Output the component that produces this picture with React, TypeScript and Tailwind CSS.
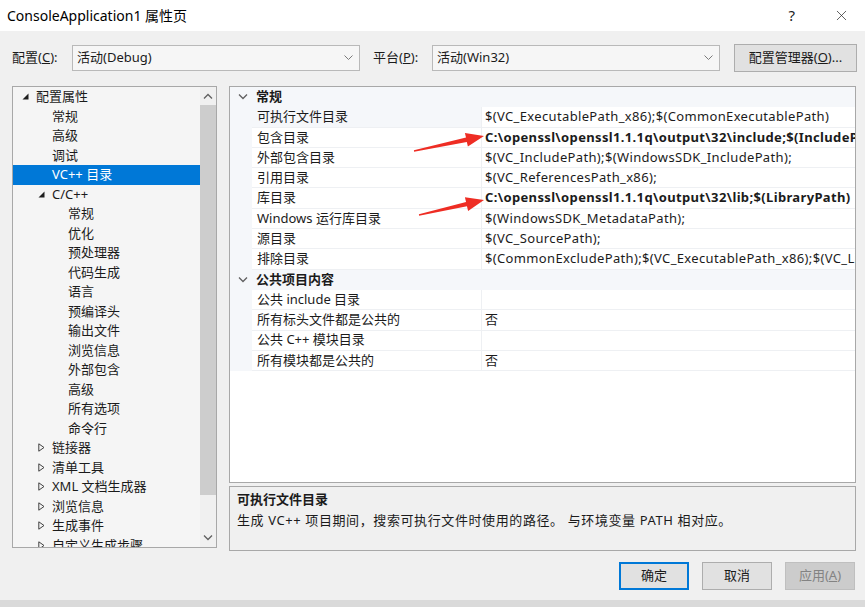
import { X } from "lucide-react";

const FONT = { fontFamily: '"Noto Sans", "Noto Sans CJK SC", sans-serif' };

type TreeItem = { label: string; level: number; expander?: "open" | "closed"; selected?: boolean };

const tree: TreeItem[] = [
  { label: "配置属性", level: 0, expander: "open" },
  { label: "常规", level: 1 },
  { label: "高级", level: 1 },
  { label: "调试", level: 1 },
  { label: "VC++ 目录", level: 1, selected: true },
  { label: "C/C++", level: 1, expander: "open" },
  { label: "常规", level: 2 },
  { label: "优化", level: 2 },
  { label: "预处理器", level: 2 },
  { label: "代码生成", level: 2 },
  { label: "语言", level: 2 },
  { label: "预编译头", level: 2 },
  { label: "输出文件", level: 2 },
  { label: "浏览信息", level: 2 },
  { label: "外部包含", level: 2 },
  { label: "高级", level: 2 },
  { label: "所有选项", level: 2 },
  { label: "命令行", level: 2 },
  { label: "链接器", level: 1, expander: "closed" },
  { label: "清单工具", level: 1, expander: "closed" },
  { label: "XML 文档生成器", level: 1, expander: "closed" },
  { label: "浏览信息", level: 1, expander: "closed" },
  { label: "生成事件", level: 1, expander: "closed" },
  { label: "自定义生成步骤", level: 1, expander: "closed" },
];

type Row =
  | { kind: "cat"; label: string }
  | { kind: "prop"; name: string; value: string; bold?: boolean; current?: boolean };

const rows: Row[] = [
  { kind: "cat", label: "常规" },
  { kind: "prop", name: "可执行文件目录", value: "$(VC_ExecutablePath_x86);$(CommonExecutablePath)", current: true },
  { kind: "prop", name: "包含目录", value: "C:\\openssl\\openssl1.1.1q\\output\\32\\include;$(IncludePath)", bold: true },
  { kind: "prop", name: "外部包含目录", value: "$(VC_IncludePath);$(WindowsSDK_IncludePath);" },
  { kind: "prop", name: "引用目录", value: "$(VC_ReferencesPath_x86);" },
  { kind: "prop", name: "库目录", value: "C:\\openssl\\openssl1.1.1q\\output\\32\\lib;$(LibraryPath)", bold: true },
  { kind: "prop", name: "Windows 运行库目录", value: "$(WindowsSDK_MetadataPath);" },
  { kind: "prop", name: "源目录", value: "$(VC_SourcePath);" },
  { kind: "prop", name: "排除目录", value: "$(CommonExcludePath);$(VC_ExecutablePath_x86);$(VC_LibraryPath_x86)" },
  { kind: "cat", label: "公共项目内容" },
  { kind: "prop", name: "公共 include 目录", value: "" },
  { kind: "prop", name: "所有标头文件都是公共的", value: "否" },
  { kind: "prop", name: "公共 C++ 模块目录", value: "" },
  { kind: "prop", name: "所有模块都是公共的", value: "否" },
];

function Chevron({ up }: { up?: boolean }) {
  return (
    <svg width="10" height="6" viewBox="0 0 10 6">
      <path d={up ? "M1 5.5 L5 1.5 L9 5.5" : "M1 0.5 L5 4.5 L9 0.5"} fill="none" stroke="#606060" strokeWidth="1.3" />
    </svg>
  );
}

function Expander({ kind }: { kind: "open" | "closed" }) {
  if (kind === "open") {
    return (
      <svg width="7" height="7" viewBox="0 0 7 7">
        <path d="M6.5 0.5 L6.5 6.5 L0.5 6.5 Z" fill="#1e1e1e" />
      </svg>
    );
  }
  return (
    <svg width="7" height="9" viewBox="0 0 7 9">
      <path d="M0.8 0.8 L6 4.5 L0.8 8.2 Z" fill="none" stroke="#404040" strokeWidth="1" />
    </svg>
  );
}

function SelectBox({ value }: { value: string }) {
  return (
    <div className="w-[288px] h-[26px] flex items-center justify-between bg-[#f6f6f6] border border-[#b9b9b9] pl-[4px] pr-[6px]">
      <span>{value}</span>
      <svg width="9" height="5" viewBox="0 0 9 5">
        <path d="M0.5 0.5 L4.5 4.5 L8.5 0.5" fill="none" stroke="#7a7a7a" strokeWidth="1" />
      </svg>
    </div>
  );
}

export default function App() {
  return (
    <div style={FONT} className="w-[865px] h-[607px] bg-[#f0f0f0] text-[13px] text-[#1b1b1b] relative overflow-hidden">
      {/* Title bar */}
      <div className="h-[31px] bg-white flex items-center pl-[7px] pr-[15px]">
        <span className="text-[14px] text-black">ConsoleApplication1 属性页</span>
        <div className="ml-auto flex items-center gap-[38px]">
          <span className="text-[15px] text-[#222]">?</span>
          <X size={17} strokeWidth={1} color="#222" />
        </div>
      </div>

      {/* Config row */}
      <div className="h-[27px] mt-[13px] flex items-center pl-[12px]">
        <span className="w-[60px]">
          配置(<span className="underline">C</span>):
        </span>
        <SelectBox value="活动(Debug)" />
        <span className="ml-[13px] w-[59px]">
          平台(<span className="underline">P</span>):
        </span>
        <SelectBox value="活动(Win32)" />
        <div className="ml-[14px] w-[123px] h-[28px] flex items-center justify-center bg-[#e1e1e1] border border-[#adadad]">
          配置管理器(<span className="underline">O</span>)...
        </div>
      </div>

      {/* Main */}
      <div className="mt-[15px] flex pl-[12px] h-[465px]">
        {/* Tree */}
        <div className="w-[205px] h-[462px] border border-[#a8a8a8] bg-[#f5f5f5] flex overflow-hidden">
          <div className="flex-1">
            {tree.map((t, i) => (
              <div
                key={i}
                className={`h-[19.5px] flex items-center ${t.selected ? "bg-[#0078d7] text-white" : ""}`}
                style={{ paddingLeft: 9 + t.level * 16 }}
              >
                <span className="w-[13px] flex items-center">{t.expander && <Expander kind={t.expander} />}</span>
                <span className="ml-[1px] whitespace-nowrap">{t.label}</span>
              </div>
            ))}
          </div>
          <div className="w-[16px] bg-[#f0f0f0] flex flex-col items-center">
            <div className="h-[18px] flex items-center justify-center">
              <Chevron up />
            </div>
            <div className="w-[16px] h-[390px] bg-[#cdcdcd]" />
            <div className="flex-1 flex items-end justify-center pb-[6px]">
              <Chevron />
            </div>
          </div>
        </div>

        {/* Right column */}
        <div className="ml-[12px] w-[627px] flex flex-col">
          <div className="h-[397px] border border-[#a8a8a8] bg-white overflow-hidden">
            {rows.map((r, i) =>
              r.kind === "cat" ? (
                <div key={i} className="h-[20.3px] flex items-center bg-[#f5f7fa]">
                  <span className="w-[26px] flex justify-center">
                    <Chevron />
                  </span>
                  <span className="font-bold">{r.label}</span>
                </div>
              ) : (
                <div key={i} className="h-[20.3px] flex bg-[#f5f7fa]">
                  <div className="w-[22px]" />
                  <div
                    className={`w-[229px] flex items-center pl-[5px] border-b border-[#eef0f3] ${r.current ? "bg-[#f5f7fa]" : "bg-white"}`}
                  >
                    {r.name}
                  </div>
                  <div className="w-[1px] bg-[#eef0f3]" />
                  <div
                    className={`flex-1 flex items-center pl-[3px] bg-white border-b border-[#eef0f3] whitespace-nowrap overflow-hidden tracking-[0.35px] ${r.bold ? "font-bold" : ""}`}
                  >
                    {r.value}
                  </div>
                </div>
              )
            )}
          </div>
          <div className="mt-[3px] h-[65px] border border-[#a8a8a8] bg-[#f0f0f0] px-[7px] pt-[2px]">
            <div className="font-bold leading-[20px]">可执行文件目录</div>
            <div className="leading-[22px] tracking-[0.6px]">生成 VC++ 项目期间，搜索可执行文件时使用的路径。 与环境变量 PATH 相对应。</div>
          </div>
        </div>
      </div>

      {/* Buttons */}
      <div className="mt-[11px] h-[28px] flex justify-end gap-[13px] pr-[10px]">
        <div className="w-[70px] h-[28px] flex items-center justify-center bg-[#e1e1e1] border-2 border-[#0078d7]">确定</div>
        <div className="w-[70px] h-[28px] flex items-center justify-center bg-[#e1e1e1] border border-[#adadad]">取消</div>
        <div className="w-[70px] h-[28px] flex items-center justify-center bg-[#cccccc] border border-[#bfbfbf] text-[#838383]">
          应用(<span className="underline">A</span>)
        </div>
      </div>

      <div className="mt-[10px] h-[7px] bg-[#dadada]" />

      {/* Annotation arrows */}
      <svg className="absolute left-0 top-0 pointer-events-none" width="865" height="607">
        <polygon
          points="413.9,150.3 466,137.6 464.9,132.9 484,136 467.9,146.6 466.8,142 414.1,151.7"
          fill="#ee2d24"
        />
        <polygon
          points="418.9,214.3 466.05,201.9 464.9,197.2 484,200 468.1,210.9 466.95,206.2 419.1,215.7"
          fill="#ee2d24"
        />
      </svg>
    </div>
  );
}
